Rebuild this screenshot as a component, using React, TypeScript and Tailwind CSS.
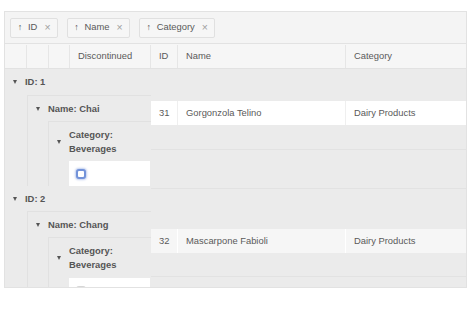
import React from 'react';

const chips = ['ID', 'Name', 'Category'];

const Caret = () => (
    <span className="inline-block w-0 h-0 border-l-[2.5px] border-r-[2.5px] border-t-[4px] border-l-transparent border-r-transparent border-t-[#555] shrink-0" />
);

const GroupHead: React.FC<{ label: string; h: string; wrap?: boolean }> = ({ label, h, wrap }) => (
    <div className={`flex items-center pl-[8px] gap-[8px] ${h}`}>
        <Caret />
        <span className={`font-bold text-[#555] leading-[14px] ${wrap ? 'w-[60px]' : 'whitespace-nowrap'}`}>{label}</span>
    </div>
);

const Check: React.FC<{ focused?: boolean }> = ({ focused }) => (
    <span
        className={`block w-[10px] h-[10px] rounded-[3px] border-2 bg-white ${
            focused ? 'border-[#7393d9] shadow-[0_0_2px_1px_rgba(115,147,217,0.45)]' : 'border-[#d6d6d6]'
        }`}
    />
);

const DataRow: React.FC<{ id: string; name: string; cat: string; alt?: boolean }> = ({ id, name, cat, alt }) => (
    <div className={`flex h-[26px] items-center text-[#5a5a5a] ${alt ? 'bg-[#f6f6f6]' : 'bg-white'}`}>
        <div className={`w-[27px] h-full flex items-center pl-[8px] border-r ${alt ? 'border-white' : 'border-[#efefef]'}`}>{id}</div>
        <div className={`w-[168px] h-full flex items-center pl-[8px] border-r ${alt ? 'border-white' : 'border-[#efefef]'}`}>{name}</div>
        <div className="flex-1 h-full flex items-center pl-[8px]">{cat}</div>
    </div>
);

const Group: React.FC<{ id: string; name: string; idH: string; catH: string; focused?: boolean }> = ({ id, name, idH, catH, focused }) => (
    <div>
        <GroupHead label={`ID: ${id}`} h={idH} />
        <div className="ml-[22px] border-t border-l border-[#e1e1e1]">
            <GroupHead label={`Name: ${name}`} h="h-[25px]" />
            <div className="ml-[20px] border-t border-l border-[#e1e1e1]">
                <GroupHead label="Category: Beverages" h={catH} wrap />
                <div className="ml-[20px] h-[25px] bg-white flex items-center pl-[7px] mr-[1px]">
                    <Check focused={focused} />
                </div>
            </div>
        </div>
    </div>
);

export default function App() {
    return (
        <div className="w-[474px] h-[319px] bg-white pt-[11px] pl-[4px] font-['Liberation_Sans',Arial,sans-serif] text-[9.4px]">
            <div className="w-[463px] h-[277px] border border-[#e2e2e2] overflow-hidden flex flex-col bg-[#ebebeb]">
                {/* group panel */}
                <div className="h-[32px] shrink-0 bg-[#f4f4f4] border-b border-[#e2e2e2] flex items-center pl-[5px] gap-[9px]">
                    {chips.map((c) => (
                        <div key={c} className="h-[20px] flex items-center px-[6px] border border-[#e0e0e0] rounded-[2px] bg-[#f6f6f6] text-[#555]">
                            <span className="w-[6px] flex justify-center text-[9px] leading-none overflow-hidden">↑</span>
                            <span className="ml-[5px] text-[#5a5a5a]">{c}</span>
                            <span className="ml-[7px] text-[#a0a0a0] text-[10.5px] leading-none">×</span>
                        </div>
                    ))}
                </div>

                {/* header */}
                <div className="h-[25px] shrink-0 flex bg-[#f6f6f6] border-b border-[#e2e2e2] text-[#5a5a5a] pt-[1px]">
                    <div className="w-[22px] border-r border-[#e6e6e6]" />
                    <div className="w-[22px] border-r border-[#e6e6e6]" />
                    <div className="w-[21px] border-r border-[#e6e6e6]" />
                    <div className="w-[81px] border-r border-[#e6e6e6] flex items-center pl-[8px]">Discontinued</div>
                    <div className="w-[27px] border-r border-[#e6e6e6] flex items-center pl-[8px]">ID</div>
                    <div className="w-[168px] border-r border-[#e6e6e6] flex items-center pl-[8px]">Name</div>
                    <div className="flex-1 flex items-center pl-[8px]">Category</div>
                </div>

                {/* body */}
                <div className="flex flex-1 min-h-0">
                    <div className="w-[146px] shrink-0">
                        <Group id="1" name="Chai" idH="h-[26px]" catH="h-[39px]" focused />
                        <Group id="2" name="Chang" idH="h-[25px]" catH="h-[40px]" />
                    </div>
                    <div className="flex-1 flex flex-col">
                        <div className="h-[32px] shrink-0" />
                        <DataRow id="31" name="Gorgonzola Telino" cat="Dairy Products" />
                        <div className="h-[25px] shrink-0 border-b border-[#e2e2e2]" />
                        <div className="h-[39px] shrink-0 border-b border-[#e2e2e2]" />
                        <div className="h-[40px] shrink-0" />
                        <DataRow id="32" name="Mascarpone Fabioli" cat="Dairy Products" alt />
                        <div className="h-[24px] shrink-0 border-b border-[#e2e2e2]" />
                        <div className="h-[10px] shrink-0" />
                    </div>
                </div>
            </div>
        </div>
    );
}
